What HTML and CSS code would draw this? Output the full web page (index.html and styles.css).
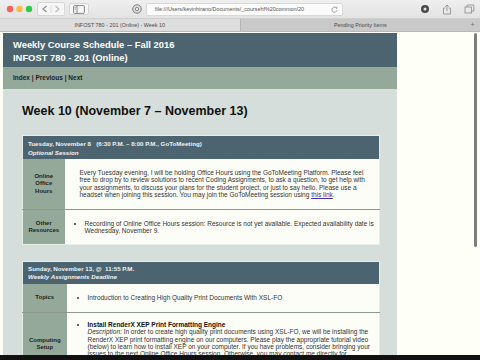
FILE: index.html
```html
<!DOCTYPE html>
<html lang="en">
<head>
  <meta charset="UTF-8">
  <meta name="viewport" content="width=device-width, initial-scale=1.0">
  <title>INFOST 780 - 201 (Online) - Week 10</title>
  <link rel="stylesheet" href="styles.css">
</head>
<body>
  <div class="window">
    <div class="toolbar">
      <svg class="lights" width="34" height="16" viewBox="0 0 34 16">
        <circle cx="10" cy="8" r="3.2" fill="#fc605c"/>
        <circle cx="19.5" cy="8" r="3.2" fill="#fdbc40"/>
        <circle cx="29" cy="8" r="3.2" fill="#34c84a"/>
      </svg>
      <div class="nav-buttons">
        <svg width="26" height="10" viewBox="0 0 26 10">
          <path d="M8.5 2 L5 5 L8.5 8" fill="none" stroke="#8a8a8a" stroke-width="1.1"/>
          <line x1="13" y1="1" x2="13" y2="9" stroke="#d0d0d0" stroke-width="0.6"/>
          <path d="M17.5 2 L21 5 L17.5 8" fill="none" stroke="#b8b8b8" stroke-width="1.1"/>
        </svg>
      </div>
      <div class="btn sidebar-btn">
        <svg width="12" height="9" viewBox="0 0 12 9">
          <rect x="0.6" y="0.6" width="10.8" height="7.8" rx="1" fill="none" stroke="#7c7c7c" stroke-width="0.9"/>
          <line x1="4" y1="0.6" x2="4" y2="8.4" stroke="#7c7c7c" stroke-width="0.9"/>
          <line x1="1.5" y1="2.5" x2="3" y2="2.5" stroke="#7c7c7c" stroke-width="0.6"/>
          <line x1="1.5" y1="4" x2="3" y2="4" stroke="#7c7c7c" stroke-width="0.6"/>
        </svg>
      </div>
      <svg class="privacy" width="10" height="10" viewBox="0 0 10 10">
        <circle cx="5" cy="5" r="4.2" fill="none" stroke="#6a6a6a" stroke-width="0.9"/>
        <circle cx="5" cy="5" r="1.8" fill="none" stroke="#6a6a6a" stroke-width="0.8"/>
      </svg>
      <div class="address">
        <span class="url">file:///Users/kevinhirano/Documents/_coursehf%20common/20</span>
        <svg width="7" height="7" viewBox="0 0 7 7">
          <path d="M5.6 2.2 A2.6 2.6 0 1 0 6 4.2" fill="none" stroke="#8a8a8a" stroke-width="0.8"/>
          <path d="M4.4 1.6 L6 2.4 L5.8 0.6" fill="none" stroke="#8a8a8a" stroke-width="0.7"/>
        </svg>
      </div>
      <div class="tools">
        <svg width="10" height="10" viewBox="0 0 10 10">
          <circle cx="5" cy="5" r="4" fill="#4a4a4a"/>
          <circle cx="5" cy="5" r="1.5" fill="#e8e8e8"/>
        </svg>
        <svg width="10" height="11" viewBox="0 0 10 11">
          <path d="M3.2 4 H1.5 V10 H8.5 V4 H6.8" fill="none" stroke="#8a8a8a" stroke-width="0.8"/>
          <path d="M5 7 V1 M3.2 2.8 L5 1 L6.8 2.8" fill="none" stroke="#8a8a8a" stroke-width="0.8"/>
        </svg>
        <svg width="11" height="10" viewBox="0 0 11 10">
          <rect x="1" y="3" width="6.5" height="6" fill="none" stroke="#8a8a8a" stroke-width="0.8"/>
          <path d="M3 3 V1 H9.8 V7 H7.5" fill="none" stroke="#8a8a8a" stroke-width="0.8"/>
        </svg>
      </div>
    </div>

    <div class="tabs">
      <div class="tab active">INFOST 780 - 201 (Online) - Week 10</div>
      <div class="tab">Pending Priority Items</div>
      <span class="new-tab">+</span>
    </div>

    <div class="viewport">
      <div class="page">
        <div class="sheet">
          <div class="banner">
            <h1>Weekly Course Schedule – Fall 2016<br>INFOST 780 - 201 (Online)</h1>
          </div>
          <div class="crumbs">
            <a href="#">Index</a> | <a href="#">Previous</a> | <a href="#">Next</a>
          </div>
          <div class="content">
            <h2>Week 10 (November 7 – November 13)</h2>

            <table class="session first">
              <colgroup><col class="label-col"><col></colgroup>
              <tr>
                <th colspan="2">Tuesday, November 8&nbsp;&nbsp;&nbsp;(6:30 P.M. – 8:00 P.M., GoToMeeting)<br><em>Optional Session</em></th>
              </tr>
              <tr>
                <td class="label">Online<br>Office<br>Hours</td>
                <td class="detail text">Every Tuesday evening, I will be holding Office Hours using the GoToMeeting Platform. Please feel free to drop by to review solutions to recent Coding Assignments, to ask a question, to get help with your assignments, to discuss your plans for the student project, or just to say hello. Please use a headset when joining this session. You may join the GoToMeeting session using <a href="#">this link</a>.</td>
              </tr>
              <tr>
                <td class="label">Other<br>Resources</td>
                <td class="detail">
                  <ul>
                    <li>Recording of Online Office Hours session: Resource is not yet available. Expected availability date is Wednesday, November 9.</li>
                  </ul>
                </td>
              </tr>
            </table>

            <table class="session second">
              <colgroup><col class="label-col"><col></colgroup>
              <tr>
                <th colspan="2">Sunday, November 13, @&nbsp;&nbsp;11:55 P.M.<br><em>Weekly Assignments Deadline</em></th>
              </tr>
              <tr>
                <td class="label">Topics</td>
                <td class="detail">
                  <ul>
                    <li>Introduction to Creating High Quality Print Documents With XSL-FO</li>
                  </ul>
                </td>
              </tr>
              <tr>
                <td class="label">Computing<br>Setup</td>
                <td class="detail top">
                  <ul>
                    <li><strong>Install RenderX XEP Print Formatting Engine</strong><br><em>Description:</em> In order to create high quality print documents using XSL-FO, we will be installing the RenderX XEP print formatting engine on our computers. Please play the appropriate tutorial video (below) to learn how to install XEP on your computer. If you have problems, consider bringing your issues to the next Online Office Hours session. Otherwise, you may contact me directly for assistance.</li>
                  </ul>
                </td>
              </tr>
            </table>
          </div>
        </div>
      </div>
      <div class="scrollbar"><div class="thumb"></div></div>
    </div>
    <div class="letterbox"></div>
  </div>
</body>
</html>
```

FILE: styles.css
```css
body {
  margin: 0;
  width: 480px;
  height: 360px;
  overflow: hidden;
  font-family: "Liberation Sans", Arial, sans-serif;
  background-color: #000;
}
.window {
  display: flex;
  flex-direction: column;
  width: 480px;
  height: 360px;
}

/* browser chrome */
.toolbar {
  display: flex;
  align-items: center;
  height: 18px;
  flex-shrink: 0;
  background: linear-gradient(#efefef, #e3e3e3);
  border-bottom: 1px solid #cfcfcf;
}
.nav-buttons {
  display: flex;
  margin-left: 3px;
  padding: 1px 0;
  background-color: #f6f6f6;
  border: 1px solid #d6d6d6;
  border-radius: 2px;
}
.btn {
  display: flex;
  align-items: center;
  justify-content: center;
  background-color: #f6f6f6;
  border: 1px solid #d6d6d6;
  border-radius: 2px;
}
.sidebar-btn {
  width: 18px;
  height: 10px;
  margin-left: 4px;
}
.privacy {
  margin-left: 43px;
}
.address {
  display: flex;
  align-items: center;
  justify-content: space-between;
  width: 183px;
  height: 11px;
  margin-left: 4px;
  padding: 0 4px 0 8px;
  background-color: #fbfbfb;
  border: 1px solid #d8d8d8;
  border-radius: 2px;
}
.url {
  font-size: 5.4px;
  color: #555;
  white-space: nowrap;
}
.tools {
  display: flex;
  align-items: center;
  gap: 12px;
  margin-left: auto;
  margin-right: 5px;
}

.tabs {
  display: flex;
  position: relative;
  height: 12px;
  flex-shrink: 0;
  border-bottom: 1px solid #b9b9b9;
}
.tab {
  flex: 1;
  display: flex;
  align-items: center;
  justify-content: center;
  font-size: 5.4px;
  color: #4a4a4a;
  background-color: #c9c9c9;
  border-left: 1px solid #b5b5b5;
}
.tab.active {
  background-color: #dedede;
  border-left: none;
}
.new-tab {
  position: absolute;
  right: 5px;
  top: 1px;
  font-size: 8px;
  line-height: 10px;
  color: #777;
}

/* page */
.viewport {
  display: flex;
  flex: 1;
  min-height: 0;
  background-color: #fefff6;
}
.page {
  flex: 1;
  padding: 1px 0 0 3px;
  overflow: hidden;
}
.sheet {
  width: 394px;
  height: 100%;
  background-color: #d5dedb;
}
.banner {
  height: 34px;
  box-sizing: border-box;
  padding: 5px 10px 0;
  background-color: #4b6470;
}
.banner h1 {
  margin: 0;
  font-size: 9.4px;
  line-height: 13px;
  color: #fff;
}
.crumbs {
  height: 22px;
  box-sizing: border-box;
  padding: 6px 10px 0;
  font-size: 6.5px;
  line-height: 9px;
  font-weight: bold;
  color: #222;
  background-color: #95a99b;
}
.crumbs a {
  color: #1d1d1d;
  text-decoration: none;
}
.content {
  padding: 0 19px;
}
.content h2 {
  margin: 15px 0 0;
  font-size: 12.5px;
  line-height: 15px;
  color: #111;
}

.session {
  width: 358px;
  margin-top: 16px;
  table-layout: fixed;
  border-collapse: collapse;
  border: 1px solid #e6ece8;
  font-size: 6.5px;
  line-height: 7.4px;
  color: #333;
}
.first .label-col {
  width: 42px;
}
.second .label-col {
  width: 44px;
}
.session th {
  padding: 2.5px 5px;
  text-align: left;
  font-size: 6.2px;
  line-height: 9px;
  color: #f2f2f2;
  background-color: #4b6470;
}
.session.second th {
  line-height: 8.5px;
}
.session td {
  border-bottom: 1px solid #8e9892;
}
.session tr:last-child td {
  border-bottom: none;
}
.label {
  text-align: center;
  font-size: 6px;
  font-weight: bold;
  color: #1e1e1e;
  background-color: #95a99b;
}
.detail {
  padding: 10px 4px 10px 13px;
  background-color: #fdfdf7;
}
.detail.text {
  padding-left: 15px;
  padding-right: 12px;
}
.detail.top {
  vertical-align: top;
  padding-top: 8px;
}
.detail a {
  color: #3a2fa0;
}
.detail ul {
  margin: 0;
  padding-left: 7px;
}
.second .detail ul {
  padding-left: 8px;
}
.detail strong {
  color: #111;
}

.scrollbar {
  width: 10px;
  flex-shrink: 0;
  padding-top: 1px;
}
.thumb {
  width: 3px;
  height: 214px;
  margin-left: 4px;
  border-radius: 2px;
  background-color: #7d7d7d;
}
.letterbox {
  height: 5px;
  flex-shrink: 0;
  background-color: #111;
}
```
